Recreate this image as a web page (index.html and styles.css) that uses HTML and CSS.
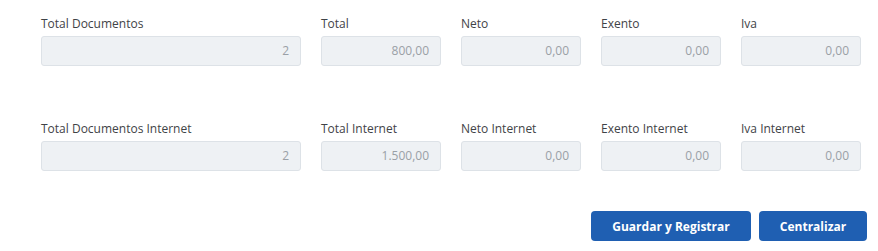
FILE: index.html
```html
<!DOCTYPE html>
<html>
<head>
<meta charset="utf-8">
<link rel="stylesheet" href="styles.css">
</head>
<body>
<div class="page">
  <div class="grid">
    <div class="field"><label class="lbl">Total Documentos</label><div class="inp">2</div></div>
    <div class="field"><label class="lbl">Total</label><div class="inp">800,00</div></div>
    <div class="field"><label class="lbl">Neto</label><div class="inp">0,00</div></div>
    <div class="field"><label class="lbl">Exento</label><div class="inp">0,00</div></div>
    <div class="field"><label class="lbl">Iva</label><div class="inp">0,00</div></div>
  </div>
  <div class="grid second">
    <div class="field"><label class="lbl">Total Documentos Internet</label><div class="inp">2</div></div>
    <div class="field"><label class="lbl">Total Internet</label><div class="inp">1.500,00</div></div>
    <div class="field"><label class="lbl">Neto Internet</label><div class="inp">0,00</div></div>
    <div class="field"><label class="lbl">Exento Internet</label><div class="inp">0,00</div></div>
    <div class="field"><label class="lbl">Iva Internet</label><div class="inp">0,00</div></div>
  </div>
  <div class="actions">
    <button class="btn">Guardar y Registrar</button>
    <button class="btn narrow">Centralizar</button>
  </div>
</div>
</body>
</html>
```
FILE: styles.css
```css
* { box-sizing: border-box; }
html, body { margin: 0; padding: 0; background: #fff; }
body { font-family: "Open Sans", "Liberation Sans", sans-serif; font-size: 12px; color: #3f4347; }
.page { width: 878px; padding: 16px 11px 0 41px; }
.grid { display: grid; grid-template-columns: 260px 120px 120px 120px 120px; column-gap: 20px; }
.second { margin-top: 55px; }
.field { display: flex; flex-direction: column; }
.lbl { display: block; line-height: 16px; height: 16px; margin-bottom: 4px; color: #3f4347; }
.inp { height: 30px; background: #eef1f4; border: 1px solid #dde2e7; border-radius: 3px; text-align: right; padding: 0 11px; line-height: 28px; color: #9aa0a6; }
.actions { display: flex; justify-content: flex-end; gap: 8px; margin-top: 40px; }
.btn { width: 160px; height: 30px; border: 0; border-radius: 4px; background: #1f5fb2; color: #fff; font-family: "Open Sans", "Liberation Sans", sans-serif; font-size: 12px; font-weight: 700; padding: 0; }
.btn.narrow { width: 108px; }
```
